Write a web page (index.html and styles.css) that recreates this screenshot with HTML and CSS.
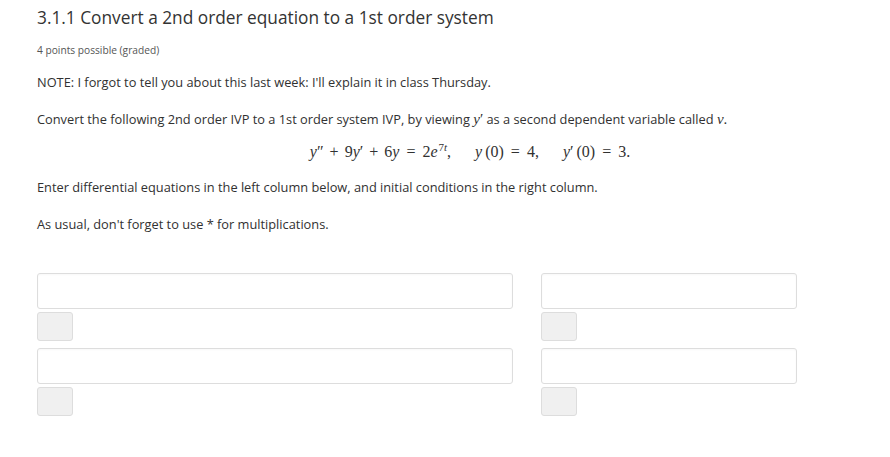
FILE: index.html
```html
<!DOCTYPE html>
<html lang="en">
<head>
    <meta charset="UTF-8">
    <meta name="viewport" content="width=device-width, initial-scale=1.0">
    <title>3.1.1 Convert a 2nd order equation to a 1st order system</title>
    <link rel="stylesheet" href="styles.css">
</head>
<body>
    <div class="problem">
        <h3 class="problem-title">3.1.1 Convert a 2nd order equation to a 1st order system</h3>
        <div class="points">4 points possible (graded)</div>

        <p>NOTE: I forgot to tell you about this last week: I'll explain it in class Thursday.</p>
        <p>Convert the following 2nd order IVP to a 1st order system IVP, by viewing <span class="math"><i>y</i>&prime;</span> as a second dependent variable called <span class="math"><i>v</i>.</span></p>
        <p class="display-math"><i>y</i>&Prime;<span class="bin">+</span>9<i>y</i>&prime;<span class="bin">+</span>6<i>y</i><span class="rel">=</span>2<i>e</i><sup>7<i>t</i></sup>,<span class="quad"></span><i>y</i><span class="thin"></span>(0)<span class="rel">=</span>4,<span class="quad"></span><i>y</i>&prime;<span class="thin"></span>(0)<span class="rel">=</span>3.</p>
        <p>Enter differential equations in the left column below, and initial conditions in the right column.</p>
        <p>As usual, don't forget to use * for multiplications.</p>

        <div class="answers">
            <div class="col col-left">
                <input type="text" class="answer-input">
                <button class="status-btn"></button>
                <input type="text" class="answer-input">
                <button class="status-btn"></button>
            </div>
            <div class="col col-right">
                <input type="text" class="answer-input">
                <button class="status-btn"></button>
                <input type="text" class="answer-input">
                <button class="status-btn"></button>
            </div>
        </div>
    </div>
</body>
</html>
```

FILE: styles.css
```css
* {
    margin: 0;
    padding: 0;
    box-sizing: border-box;
}

body {
    background: #fff;
    color: #313131;
    font-family: 'Open Sans', 'Noto Sans', sans-serif;
}

.problem {
    padding: 6px 37px 0 37px;
}

.problem-title {
    font-size: 17.3px;
    font-weight: 400;
    color: #333;
    line-height: 24px;
}

.points {
    font-size: 10.2px;
    color: #555;
    margin-top: 12px;
    line-height: 16px;
}

.problem p {
    font-size: 12.8px;
    line-height: 20px;
    margin-top: 14px;
}

.problem p + p {
    margin-top: 17px;
}

.math {
    font-family: 'Liberation Serif', 'DejaVu Serif', serif;
    font-size: 15px;
}

.problem .display-math {
    text-align: center;
    font-family: 'Liberation Serif', 'DejaVu Serif', serif;
    font-size: 16px;
    margin-top: 13px;
    margin-bottom: -2px;
    padding-left: 50px;
}

.display-math sup {
    font-size: 11px;
    vertical-align: 6px;
    line-height: 0;
    margin-left: 1px;
}

.display-math .bin {
    margin: 0 6px;
}

.display-math .rel {
    margin: 0 7px;
}

.display-math .quad {
    display: inline-block;
    width: 24px;
}

.display-math .thin {
    display: inline-block;
    width: 3px;
}

.answers {
    display: flex;
    gap: 28px;
    margin-top: 39px;
}

.col {
    display: flex;
    flex-direction: column;
    align-items: flex-start;
}

.col-left {
    width: 476px;
}

.col-right {
    width: 256px;
}

.answer-input {
    width: 100%;
    height: 36px;
    border: 1px solid #ddd;
    border-radius: 3px;
    background: #fff;
    box-shadow: inset 0 1px 2px rgba(0, 0, 0, 0.03);
}

.status-btn {
    width: 36px;
    height: 29px;
    margin-top: 3px;
    margin-bottom: 7px;
    border: 1px solid #ddd;
    border-radius: 3px;
    background: #f0f0f0;
}
```
